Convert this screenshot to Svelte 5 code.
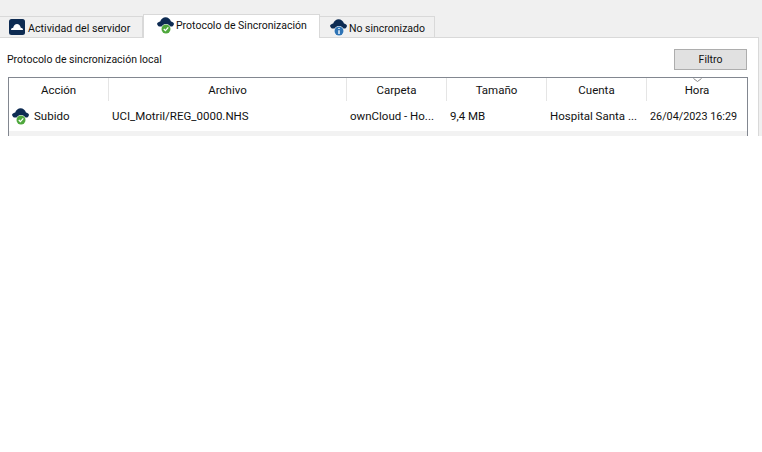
<script>
  const columns = [
    { label: 'Acción', width: 100 },
    { label: 'Archivo', width: 238 },
    { label: 'Carpeta', width: 100 },
    { label: 'Tamaño', width: 100 },
    { label: 'Cuenta', width: 100 },
    { label: 'Hora', width: 100 }
  ];
  const cells = [
    { text: 'UCI_Motril/REG_0000.NHS', width: 238 },
    { text: 'ownCloud - Ho...', width: 100 },
    { text: '9,4 MB', width: 100 },
    { text: 'Hospital Santa ...', width: 100 },
    { text: '26/04/2023 16:29', width: 100 }
  ];
</script>

{#snippet cloud(badge)}
  <svg class="icon" width="18" height="17" viewBox="0 0 18 17">
    <path d="M0 6.8 C0.8 5.4 2 4.8 3.2 4.6 C4 1.8 6.2 0.2 8.6 0.2 C11 0.2 13.2 1.8 14 4.6 C15.2 4.8 16.4 5.4 17 6.8 C16.8 8.2 16 9.4 15 9.6 H2.2 C1.2 9.4 0.4 8.2 0 6.8 Z" fill="#0d2b52" />
    <circle cx="9" cy="12" r="5" fill="#fff" />
    {#if badge === 'ok'}
      <circle cx="9" cy="12" r="4.5" fill="#4fa83d" />
      <path d="M6.8 12 L8.4 13.6 L11.3 10.4" fill="none" stroke="#fff" stroke-width="1.3" />
    {:else}
      <circle cx="9" cy="12" r="4.5" fill="#2f74b5" />
      <path d="M9 11.2 V15 M9 8.9 V10.1" fill="none" stroke="#fff" stroke-width="1.4" />
    {/if}
  </svg>
{/snippet}

<div class="window">
  <div class="app">
    <div class="tabs">
      <div class="tab first">
        <svg class="icon" width="16" height="16" viewBox="0 0 16 16">
          <rect width="16" height="16" rx="2.5" fill="#0d2b52" />
          <path d="M2 11 C2 9.6 3 8.8 4.2 8.8 C4.6 6.6 6.2 5 8 5 C9.8 5 11.4 6.6 11.8 8.8 C13 8.8 14 9.6 14 11 Z" fill="#fff" />
        </svg>
        <span>Actividad del servidor</span>
      </div>
      <div class="tab active">
        {@render cloud('ok')}
        <span>Protocolo de Sincronización</span>
      </div>
      <div class="tab last">
        {@render cloud('info')}
        <span>No sincronizado</span>
      </div>
    </div>

    <div class="pane">
      <div class="toolbar">
        <span>Protocolo de sincronización local</span>
        <button>Filtro</button>
      </div>
      <div class="table">
        <div class="head">
          {#each columns as c, i}
            <div class="th" style="width:{c.width}px">
              {#if i === 5}<svg class="sort" width="9" height="4" viewBox="0 0 9 4"><path d="M0.5 0.5 L4.5 3.5 L8.5 0.5" fill="none" stroke="#8a8a8a" /></svg>{/if}
              {c.label}
            </div>
          {/each}
        </div>
        <div class="row">
          <div class="td action">
            {@render cloud('ok')}
            <span>Subido</span>
          </div>
          {#each cells as c}
            <div class="td" style="width:{c.width}px">{c.text}</div>
          {/each}
        </div>
        <div class="alt"></div>
      </div>
    </div>
  </div>
</div>

<style>
  :global(body) { margin: 0; background: #fff; }
  .window {
    width: 762px;
    height: 452px;
    overflow: hidden;
    background: #fff;
    font-family: Roboto, "Noto Sans", sans-serif;
    font-size: 10.5px;
    color: #111;
  }
  .app { height: 136px; overflow: hidden; background: #f0f0f0; }
  .tabs {
    display: flex;
    align-items: flex-end;
    height: 37px;
    box-sizing: border-box;
  }
  .tab {
    display: flex;
    align-items: center;
    box-sizing: border-box;
    height: 21px;
    background: #f0f0f0;
    border: 1px solid #d9d9d9;
    border-bottom: 0;
    white-space: nowrap;
  }
  .tab span { padding-top: 3px; }
  .tab.first { width: 143px; padding-left: 9px; border-left: 0; gap: 3px; font-size: 10.7px; }
  .tab.active {
    width: 177px;
    height: 24px;
    margin-bottom: -1px;
    padding: 0 0 2px 13px;
    gap: 1px;
    background: #fff;
    position: relative;
    z-index: 1;
  }
  .tab.active span { padding-top: 0; }
  .tab.last { width: 116px; margin-left: -1px; padding-left: 10px; gap: 1px; }
  .tab .icon { flex: none; }
  .pane {
    height: 99px;
    box-sizing: border-box;
    width: 759px;
    background: #fff;
    border-top: 1px solid #d9d9d9;
    border-right: 1px solid #d9d9d9;
    padding: 11px 10px 0 8px;
  }
  .toolbar {
    display: flex;
    align-items: center;
    justify-content: space-between;
    height: 21px;
    margin: 0 1px 7px -1px;
  }
  button {
    width: 73px;
    height: 21px;
    padding: 0;
    font: inherit;
    color: inherit;
    background: #e1e1e1;
    border: 1px solid #adadad;
  }
  .table {
    width: 740px;
    height: 59px;
    box-sizing: border-box;
    border: solid #828790;
    border-width: 1px 1px 0 1px;
    font-size: 11.5px;
  }
  .head { display: flex; height: 25px; }
  .th {
    position: relative;
    display: flex;
    align-items: center;
    justify-content: center;
    box-sizing: border-box;
    height: 23px;
    border-right: 1px solid #e5e5e5;
  }
  .th:last-child { border-right: 0; }
  .sort { position: absolute; top: 0; left: 46px; }
  .row {
    display: flex;
    align-items: center;
    box-sizing: border-box;
    height: 28px;
    padding-bottom: 2px;
    background: #fff;
  }
  .td {
    box-sizing: border-box;
    padding-left: 3px;
    white-space: nowrap;
    overflow: hidden;
  }
  .td:last-child { font-size: 10.8px; }
  .action { display: flex; align-items: center; gap: 4px; width: 100px; padding-left: 3px; }
  .alt { height: 5px; background: #f2f2f2; }
</style>
